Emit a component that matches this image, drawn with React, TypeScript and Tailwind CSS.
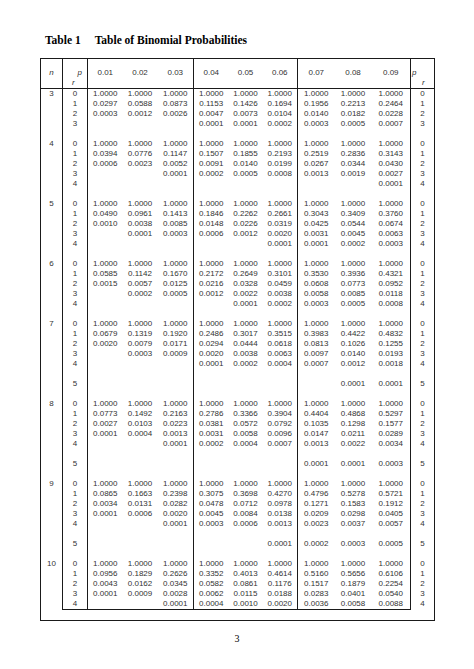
import React from 'react';

const ONE = Array(9).fill('1.0000');

// left-pad a short row with blanks so it lines up under the 9 p columns
const pad = (vals: string[]) => [...Array(9 - vals.length).fill(''), ...vals];

const blocks = [
  {
    n: 3,
    rows: [
      ONE,
      ['0.0297', '0.0588', '0.0873', '0.1153', '0.1426', '0.1694', '0.1956', '0.2213', '0.2464'],
      ['0.0003', '0.0012', '0.0026', '0.0047', '0.0073', '0.0104', '0.0140', '0.0182', '0.0228'],
      pad(['0.0001', '0.0001', '0.0002', '0.0003', '0.0005', '0.0007']),
    ],
  },
  {
    n: 4,
    rows: [
      ONE,
      ['0.0394', '0.0776', '0.1147', '0.1507', '0.1855', '0.2193', '0.2519', '0.2836', '0.3143'],
      ['0.0006', '0.0023', '0.0052', '0.0091', '0.0140', '0.0199', '0.0267', '0.0344', '0.0430'],
      pad(['0.0001', '0.0002', '0.0005', '0.0008', '0.0013', '0.0019', '0.0027']),
      pad(['0.0001']),
    ],
  },
  {
    n: 5,
    rows: [
      ONE,
      ['0.0490', '0.0961', '0.1413', '0.1846', '0.2262', '0.2661', '0.3043', '0.3409', '0.3760'],
      ['0.0010', '0.0038', '0.0085', '0.0148', '0.0226', '0.0319', '0.0425', '0.0544', '0.0674'],
      pad(['0.0001', '0.0003', '0.0006', '0.0012', '0.0020', '0.0031', '0.0045', '0.0063']),
      pad(['0.0001', '0.0001', '0.0002', '0.0003']),
    ],
  },
  {
    n: 6,
    rows: [
      ONE,
      ['0.0585', '0.1142', '0.1670', '0.2172', '0.2649', '0.3101', '0.3530', '0.3936', '0.4321'],
      ['0.0015', '0.0057', '0.0125', '0.0216', '0.0328', '0.0459', '0.0608', '0.0773', '0.0952'],
      pad(['0.0002', '0.0005', '0.0012', '0.0022', '0.0038', '0.0058', '0.0085', '0.0118']),
      pad(['0.0001', '0.0002', '0.0003', '0.0005', '0.0008']),
    ],
  },
  {
    n: 7,
    rows: [
      ONE,
      ['0.0679', '0.1319', '0.1920', '0.2486', '0.3017', '0.3515', '0.3983', '0.4422', '0.4832'],
      ['0.0020', '0.0079', '0.0171', '0.0294', '0.0444', '0.0618', '0.0813', '0.1026', '0.1255'],
      pad(['0.0003', '0.0009', '0.0020', '0.0038', '0.0063', '0.0097', '0.0140', '0.0193']),
      pad(['0.0001', '0.0002', '0.0004', '0.0007', '0.0012', '0.0018']),
    ],
    five: pad(['0.0001', '0.0001']),
  },
  {
    n: 8,
    rows: [
      ONE,
      ['0.0773', '0.1492', '0.2163', '0.2786', '0.3366', '0.3904', '0.4404', '0.4868', '0.5297'],
      ['0.0027', '0.0103', '0.0223', '0.0381', '0.0572', '0.0792', '0.1035', '0.1298', '0.1577'],
      ['0.0001', '0.0004', '0.0013', '0.0031', '0.0058', '0.0096', '0.0147', '0.0211', '0.0289'],
      pad(['0.0001', '0.0002', '0.0004', '0.0007', '0.0013', '0.0022', '0.0034']),
    ],
    five: pad(['0.0001', '0.0001', '0.0003']),
  },
  {
    n: 9,
    rows: [
      ONE,
      ['0.0865', '0.1663', '0.2398', '0.3075', '0.3698', '0.4270', '0.4796', '0.5278', '0.5721'],
      ['0.0034', '0.0131', '0.0282', '0.0478', '0.0712', '0.0978', '0.1271', '0.1583', '0.1912'],
      ['0.0001', '0.0006', '0.0020', '0.0045', '0.0084', '0.0138', '0.0209', '0.0298', '0.0405'],
      pad(['0.0001', '0.0003', '0.0006', '0.0013', '0.0023', '0.0037', '0.0057']),
    ],
    five: pad(['0.0001', '0.0002', '0.0003', '0.0005']),
  },
  {
    n: 10,
    rows: [
      ONE,
      ['0.0956', '0.1829', '0.2626', '0.3352', '0.4013', '0.4614', '0.5160', '0.5656', '0.6106'],
      ['0.0043', '0.0162', '0.0345', '0.0582', '0.0861', '0.1176', '0.1517', '0.1879', '0.2254'],
      ['0.0001', '0.0009', '0.0028', '0.0062', '0.0115', '0.0188', '0.0283', '0.0401', '0.0540'],
      pad(['0.0001', '0.0004', '0.0010', '0.0020', '0.0036', '0.0058', '0.0088']),
    ],
    last: true,
  },
];

type Row = { n: string; r: string; v: string[] };

const EMPTY = Array(9).fill('');
const rows: Row[] = [];
blocks.forEach((b) => {
  b.rows.forEach((v, r) => rows.push({ n: r === 0 ? String(b.n) : '', r: String(r), v }));
  if (b.last) return;
  rows.push({ n: '', r: '', v: EMPTY });
  if (b.five) {
    rows.push({ n: '', r: '5', v: b.five });
    rows.push({ n: '', r: '', v: EMPTY });
  }
});

const heads = ['0.01', '0.02', '0.03', '0.04', '0.05', '0.06', '0.07', '0.08', '0.09'];
// columns that close a group of three get the vertical rule
const groupEnd = [2, 5, 8];
const line = 'border-[#1a1a1a]';

export default function App() {
  return (
    <div className="w-[474px] h-[669px] bg-white text-[#333] overflow-hidden">
      <div className="pt-[33px] pl-[45px] flex gap-[14px] text-[11.5px] leading-[15px] font-bold text-black font-['Liberation_Serif',serif]">
        <span>Table 1</span>
        <span>Table of Binomial Probabilities</span>
      </div>

      <table
        className={`mt-[10px] ml-[40px] table-fixed border-collapse border ${line} text-[8px] leading-[10px] font-['Liberation_Sans',Arial,sans-serif]`}
      >
        <colgroup>
          <col className="w-[22px]" />
          <col className="w-[25px]" />
          <col className="w-[35px]" />
          <col className="w-[35px]" />
          <col className="w-[36px]" />
          <col className="w-[35px]" />
          <col className="w-[34px]" />
          <col className="w-[35px]" />
          <col className="w-[37px]" />
          <col className="w-[37px]" />
          <col className="w-[39px]" />
          <col className="w-[24px]" />
        </colgroup>
        <thead>
          <tr className="h-[30px]">
            <th className={`p-0 pt-[9px] align-top font-normal italic text-center border-r border-b ${line}`}>n</th>
            <th className={`p-0 pt-[9px] align-top font-normal italic border-r border-b ${line}`}>
              <div className="flex flex-col">
                <span className="self-end pr-[5px]">p</span>
                <span className="self-start pl-[9px]">r</span>
              </div>
            </th>
            {heads.map((h, i) => (
              <th
                key={h}
                className={`p-0 pt-[9px] align-top font-normal text-center border-b ${line} ${
                  groupEnd.includes(i) ? 'border-r' : ''
                }`}
              >
                {h}
              </th>
            ))}
            <th className={`p-0 pt-[9px] align-top font-normal italic border-b ${line}`}>
              <div className="flex flex-col">
                <span className="self-start pl-[1px]">p</span>
                <span className="self-start pl-[11px]">r</span>
              </div>
            </th>
          </tr>
        </thead>
        <tbody>
          {rows.map((row, k) => (
            <tr key={k} className="h-[10px]">
              <td className={`p-0 text-center border-r ${line}`}>{row.n}</td>
              <td className={`p-0 text-center border-r ${line}`}>{row.r}</td>
              {row.v.map((v, i) => (
                <td
                  key={i}
                  className={`p-0 text-center ${groupEnd.includes(i) ? `border-r ${line}` : ''}`}
                >
                  {v}
                </td>
              ))}
              <td className="p-0 text-center">{row.r}</td>
            </tr>
          ))}
          <tr className="h-[11px]">
            <td className="p-0" />
            <td colSpan={10} className={`p-0 border-t ${line}`} />
            <td className="p-0" />
          </tr>
        </tbody>
      </table>

      <div className="mt-[12px] text-center text-[10px] leading-[12px] text-black font-['Liberation_Serif',serif]">
        3
      </div>
    </div>
  );
}
